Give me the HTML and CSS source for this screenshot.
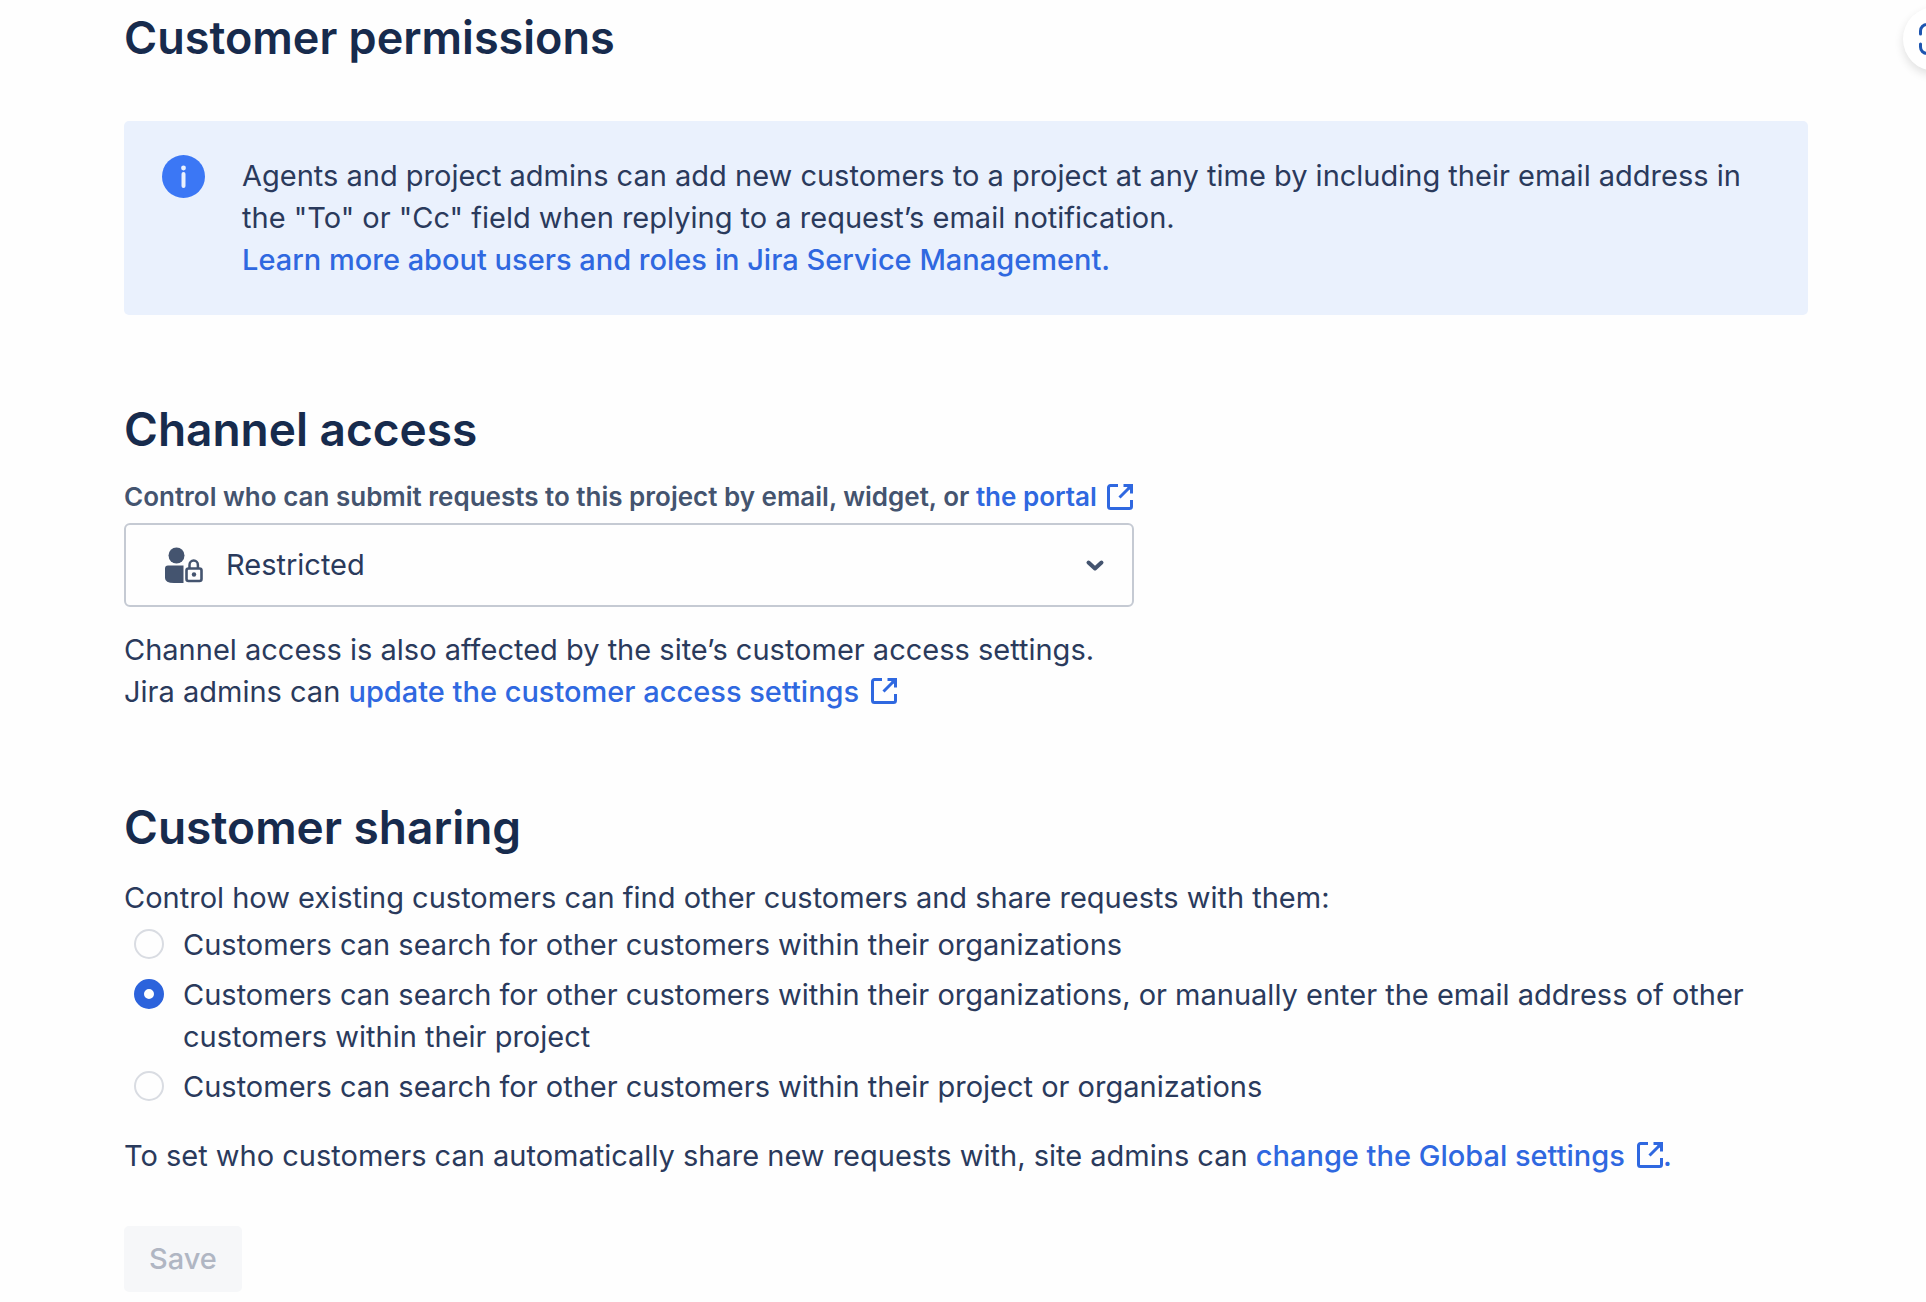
FILE: index.html
```html
<!DOCTYPE html>
<html lang="en">
<head>
  <meta charset="utf-8">
  <meta name="viewport" content="width=device-width, initial-scale=1">
  <title>Customer permissions</title>
  <link rel="stylesheet" href="styles.css">
</head>
<body>
  <svg class="sprite" aria-hidden="true">
    <symbol id="external" viewBox="0 0 26 26">
      <path d="M11 1.500H3.500a2 2 0 0 0-2 2v19a2 2 0 0 0 2 2h19a2 2 0 0 0 2-2V16M12.500 13.500 24 2M16.500 1.500h8v8" fill="none" stroke="currentColor" stroke-width="3"/>
      <path d="M17 0h9v9z" fill="currentColor"/>
    </symbol>
  </svg>

  <main class="page">
    <h1 class="heading title">Customer permissions</h1>

    <section class="notice">
      <svg class="notice-icon" viewBox="0 0 43 43" aria-hidden="true">
        <circle cx="21.500" cy="21.500" r="21.500" fill="#3b77f5"/>
        <circle cx="21.500" cy="13" r="2.400" fill="#eaf1fd"/>
        <path d="M21.500 19v12" stroke="#eaf1fd" stroke-width="4" stroke-linecap="round"/>
      </svg>
      <p class="text">Agents and project admins can add new customers to a project at any time by including their email address in the "To" or "Cc" field when replying to a request’s email notification.<br><a class="link" href="#roles">Learn more about users and roles in Jira Service Management.</a></p>
    </section>

    <section class="section">
      <h2 class="heading">Channel access</h2>
      <div class="field">
        <p class="label"><label for="access">Control who can submit requests to this project by email, widget, or</label> <a class="link" href="#portal">the portal<svg class="external"><use href="#external"/></svg></a></p>
        <div class="select">
          <svg class="select-user" viewBox="0 0 40 36" aria-hidden="true">
            <circle cx="12.500" cy="8.500" r="8" fill="#44546f"/>
            <path d="M4 18.500h15.500V36H10Q1 36 1 31v-9.500a3 3 0 0 1 3-3z" fill="#44546f"/>
            <path d="M25.500 22v-4a4.200 4.500 0 0 1 8.400 0v4" fill="none" stroke="#44546f" stroke-width="2.500"/>
            <rect x="22.500" y="21.500" width="15" height="12.500" rx="2" fill="none" stroke="#44546f" stroke-width="2.600"/>
            <circle cx="30" cy="27.500" r="2.200" fill="#44546f"/>
          </svg>
          <select class="select-input" id="access">
            <option>Restricted</option>
            <option>Open</option>
          </select>
          <svg class="select-arrow" viewBox="0 0 20 20" aria-hidden="true">
            <path d="m3.500 7.500 6.500 6 6.500-6" fill="none" stroke="#44546f" stroke-width="4" stroke-linecap="round" stroke-linejoin="round"/>
          </svg>
        </div>
      </div>
      <p class="text">Channel access is also affected by the site’s customer access settings.<br>Jira admins can <a class="link" href="#access-settings">update the customer access settings<svg class="external"><use href="#external"/></svg></a></p>
    </section>

    <form class="section">
      <h2 class="heading">Customer sharing</h2>
      <fieldset class="choices">
        <legend class="text">Control how existing customers can find other customers and share requests with them:</legend>
        <label class="choice"><input class="radio" type="radio" name="sharing"><span>Customers can search for other customers within their organizations</span></label>
        <label class="choice"><input class="radio" type="radio" name="sharing" checked><span>Customers can search for other customers within their organizations, or manually enter the email address of other customers within their project</span></label>
        <label class="choice"><input class="radio" type="radio" name="sharing"><span>Customers can search for other customers within their project or organizations</span></label>
      </fieldset>
      <p class="text">To set who customers can automatically share new requests with, site admins can <a class="link" href="#global">change the Global settings<svg class="external"><use href="#external"/></svg>.</a></p>
      <button class="save" type="submit" disabled>Save</button>
    </form>
  </main>

  <button class="capture" type="button" aria-label="Capture">
    <svg class="capture-icon" viewBox="0 0 32 32" fill="none" stroke="#1d55b0" stroke-width="3" stroke-linecap="round" aria-hidden="true">
      <path d="M1.500 11V8a6.500 6.500 0 0 1 6.500-6.500h3M21 1.500h3A6.500 6.500 0 0 1 30.500 8v3M30.500 21v3a6.500 6.500 0 0 1-6.500 6.500h-3M11 30.500H8A6.500 6.500 0 0 1 1.500 24v-3"/>
      <path d="M8 8h16M16 8v15" stroke-width="2"/>
    </svg>
  </button>
</body>
</html>
```

FILE: styles.css
```css
* {
  box-sizing: border-box;
}

body {
  margin: 0;
  background: #fefefe;
  color: #2a3a5c;
  font-family: Inter, "Liberation Sans", sans-serif;
  font-size: 29px;
  line-height: 42px;
}

.sprite {
  display: none;
}

.page {
  display: flex;
  flex-direction: column;
  padding: 10px 118px 10px 124px;
}

.heading {
  margin: 0;
  color: #172b4d;
  font-size: 46px;
  font-weight: 600;
  line-height: 56px;
}

.title {
  font-size: 45px;
}

.text {
  margin: 0;
  padding: 0;
}

.link {
  color: #2f68e0;
  font-weight: 500;
  text-decoration: none;
}

.external {
  width: 26px;
  height: 26px;
  margin-left: 12px;
  vertical-align: -2px;
}

.notice {
  display: flex;
  gap: 37px;
  margin-top: 55px;
  padding: 34px 38px;
  border-radius: 5px;
  background: #eaf1fd;
}

.notice-icon {
  flex: none;
  width: 43px;
  height: 43px;
}

.section {
  display: flex;
  flex-direction: column;
  align-items: flex-start;
  gap: 22px;
  margin-top: 86px;
}

.field {
  display: flex;
  flex-direction: column;
  gap: 8px;
  width: 60%;
}

.label {
  margin: 0;
  color: #44546f;
  font-size: 26px;
  font-weight: 600;
  line-height: 36px;
  white-space: nowrap;
}

.label .link {
  font-weight: 600;
}

.label .external {
  margin-left: 10px;
  vertical-align: -4px;
}

.select {
  display: grid;
  align-items: center;
}

.select > * {
  grid-area: 1 / 1;
}

.select-input {
  appearance: none;
  width: 100%;
  height: 84px;
  padding: 0 100px;
  border: 2px solid #c5cad3;
  border-radius: 6px;
  background: #fefefe;
  color: inherit;
  font: inherit;
}

.select-user,
.select-arrow {
  z-index: 1;
  pointer-events: none;
}

.select-user {
  width: 40px;
  height: 36px;
  margin-left: 40px;
}

.select-arrow {
  justify-self: end;
  width: 20px;
  height: 20px;
  margin-right: 29px;
}

.choices {
  display: flex;
  flex-direction: column;
  gap: 8px;
  margin: 0;
  padding: 5px 0;
  border: 0;
}

.choice {
  display: flex;
  gap: 19px;
  padding-left: 10px;
}

.radio {
  appearance: none;
  flex: none;
  width: 30px;
  height: 30px;
  margin: 5px 0;
  border: 2px solid #d9dce2;
  border-radius: 50%;
  background: #fefefe;
}

.radio:checked {
  border: 10px solid #2c63dc;
}

.save {
  height: 66px;
  margin-top: 27px;
  padding: 0 25px;
  border: 0;
  border-radius: 5px;
  background: #f6f7f9;
  color: #b0b6c3;
  font: inherit;
  font-weight: 500;
}

.capture {
  position: fixed;
  top: 7px;
  right: -41px;
  display: grid;
  place-items: center;
  width: 64px;
  height: 64px;
  padding: 0;
  border: 0;
  border-radius: 50%;
  background: #ffffff;
  box-shadow: 0 4px 10px rgba(0, 0, 0, 0.12);
}

.capture-icon {
  width: 32px;
  height: 32px;
}
```
